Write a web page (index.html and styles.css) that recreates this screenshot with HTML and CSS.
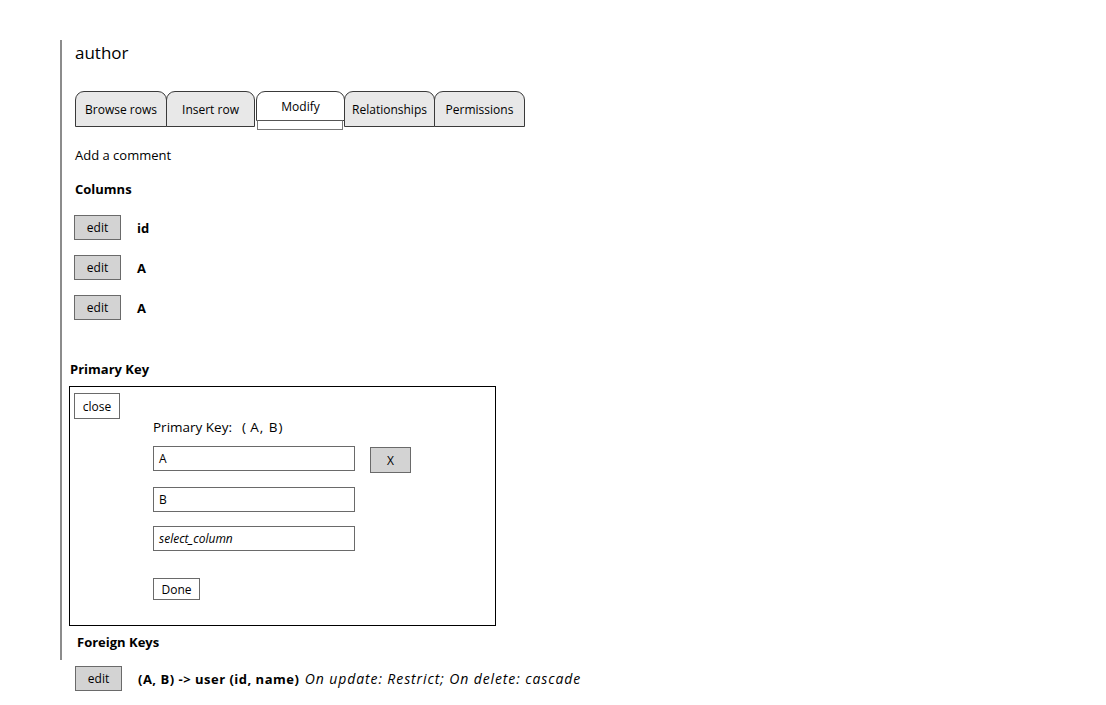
FILE: index.html
```html
<!DOCTYPE html>
<html>
<head>
<meta charset="utf-8">
<link rel="stylesheet" href="styles.css">
</head>
<body>
<div class="frame">
  <div class="title">author</div>
  <div class="tabs">
    <div class="tab t1">Browse rows</div>
    <div class="tab t2">Insert row</div>
    <div class="tab t3 active">Modify</div>
    <div class="tab t4">Relationships</div>
    <div class="tab t5">Permissions</div>
  </div>
  <div class="comment">Add a comment</div>
  <div class="heading cols">Columns</div>
  <div class="rows">
    <div class="row"><span class="btn gray">edit</span><span class="colname">id</span></div>
    <div class="row"><span class="btn gray">edit</span><span class="colname">A</span></div>
    <div class="row"><span class="btn gray">edit</span><span class="colname">A</span></div>
  </div>
  <div class="heading pk">Primary Key</div>
  <div class="pkbox">
    <span class="btn white close">close</span>
    <div class="pkcontent">
      <div class="pktitle"><span>Primary Key:</span><span class="pkval">(&thinsp;A, B)</span></div>
      <div class="pkrow"><div class="field">A</div><span class="btn gray xbtn">X</span></div>
      <div class="pkrow"><div class="field">B</div></div>
      <div class="pkrow"><div class="field ital">select_column</div></div>
      <span class="btn white done">Done</span>
    </div>
  </div>
  <div class="heading fk">Foreign Keys</div>
</div>
<div class="fkrow">
  <span class="btn gray">edit</span>
  <span class="fktext"><b>(A, B) -&gt; user (id, name)</b> <i>On update: Restrict; On delete: cascade</i></span>
</div>
</body>
</html>
```
FILE: styles.css
```css
* { box-sizing: border-box; }
body {
  margin: 0;
  background: #fff;
  color: #000;
  font-family: "Open Sans", "DejaVu Sans", sans-serif;
  font-size: 13px;
}
.frame {
  margin: 40px 0 0 60px;
  border-left: 2px solid #8c8c8c;
  padding: 0 0 9px 13px;
  width: 560px;
}
.title {
  font-size: 17px;
  line-height: 26px;
  height: 26px;
}
.tabs {
  margin-top: 25px;
  display: flex;
  height: 36px;
  align-items: flex-start;
}
.tab {
  height: 36px;
  border: 1px solid #3a3a3a;
  border-radius: 9px 9px 0 0;
  background: #e8e8e8;
  font-size: 12px;
  display: flex;
  align-items: center;
  justify-content: center;
}
.t1 { width: 92px; }
.t2 { width: 89px; margin-left: -1px; }
.t3 { width: 89px; margin-left: 1px; }
.t4 { width: 91px; margin-left: -1px; }
.t5 { width: 91px; margin-left: -1px; }
.tab.active {
  background: #fff;
  position: relative;
  height: 30px;
  border-bottom: 1px solid #3a3a3a;
}
.tab.active::after {
  content: "";
  position: absolute;
  left: 0;
  right: 1px;
  top: 28px;
  height: 8px;
  background: #fff;
  border: 1px solid #777;
  border-top: 1px solid #555;
}
.comment {
  margin-top: 19px;
  line-height: 18px;
}
.heading {
  font-weight: bold;
  line-height: 18px;
}
.cols { margin-top: 16px; }
.rows {
  margin-top: 17px;
  display: flex;
  flex-direction: column;
  gap: 15px;
}
.row {
  display: flex;
  align-items: center;
  gap: 16px;
  margin-left: -1px;
}
.colname { font-weight: bold; }
.btn {
  display: inline-flex;
  align-items: center;
  justify-content: center;
  width: 47px;
  height: 25px;
  border: 1.5px solid #6a6a6a;
  font-size: 12px;
}
.btn.gray { background: #d3d3d3; }
.btn.white { background: #fff; }
.pk {
  margin-top: 40px;
  margin-left: -5px;
}
.pkbox {
  margin-top: 8px;
  margin-left: -6px;
  width: 427px;
  height: 240px;
  border: 1px solid #000;
  display: flex;
  align-items: flex-start;
  padding: 6px 0 0 4px;
}
.close { width: 46px; height: 26px; }
.pkcontent {
  margin-left: 33px;
  padding-top: 25px;
  display: flex;
  flex-direction: column;
  align-items: flex-start;
}
.pktitle {
  line-height: 18px;
  font-size: 13.5px;
  display: flex;
  gap: 10px;
}
.pkval { letter-spacing: 1px; }
.pkrow {
  display: flex;
  align-items: flex-start;
  margin-top: 10px;
}
.pkrow + .pkrow { margin-top: 14px; }
.field {
  width: 202px;
  height: 25px;
  border: 1.5px solid #6a6a6a;
  padding-left: 5px;
  font-size: 12px;
  display: flex;
  align-items: center;
  background: #fff;
}
.ital { font-style: italic; }
.xbtn {
  width: 41px;
  height: 26px;
  margin-left: 15px;
  margin-top: 1px;
}
.done {
  margin-top: 27px;
  width: 47px;
  height: 22px;
}
.fk {
  margin-top: 7px;
  margin-left: 2px;
}
.fkrow {
  margin: 6px 0 0 75px;
  display: flex;
  align-items: center;
  gap: 16px;
}
.fktext { font-size: 13px; }
.fktext b { letter-spacing: 0.5px; }
.fktext i { font-size: 14px; letter-spacing: 0.9px; margin-left: 2px; }
```
